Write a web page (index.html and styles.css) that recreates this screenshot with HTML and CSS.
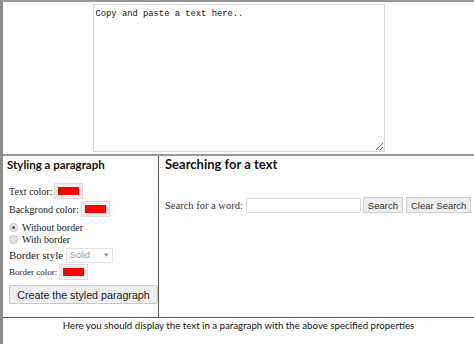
FILE: index.html
```html
<!DOCTYPE html>
<html lang="en">
<head>
    <meta charset="UTF-8">
    <title>Text styling</title>
    <link rel="stylesheet" href="styles.css">
</head>
<body>

<div class="page">
    <!-- area de texto -->
    <div class="text-row">
        <textarea class="source">Copy and paste a text here..</textarea>
    </div>

    <div class="tools-row">
        <div class="styling">
            <h3>Styling a paragraph</h3>
            <div class="field"><label>Text color:</label> <span class="swatch"></span></div>
            <div class="field"><label>Backgrond color:</label> <span class="swatch"></span></div>
            <div class="radios">
                <label><span class="radio checked"></span> Without border</label>
                <label><span class="radio"></span> With border</label>
            </div>
            <div class="field big"><label>Border style</label> <span class="select">Solid <i>&#9660;</i></span></div>
            <div class="field small"><label>Border color:</label> <span class="swatch"></span></div>
            <button class="create">Create the styled paragraph</button>
        </div>

        <div class="searching">
            <h3>Searching for a text</h3>
            <div class="search-line">
                <label>Search for a word:</label>
                <input type="text" class="word">
                <button class="btn">Search</button>
                <button class="btn">Clear Search</button>
            </div>
        </div>
    </div>

    <div class="result">Here you should display the text in a paragraph with the above specified properties</div>
</div>

</body>
</html>
```
FILE: styles.css
```css
body {
    margin: 0;
    background-color: #fff;
    font-family: "Liberation Serif", serif;
    overflow: hidden;
}

.page {
    border-left: 3px solid #8c8c8c;
    border-top: 2px solid #999;
    height: 342px;
}

.text-row {
    height: 154px;
    padding-top: 2px;
    box-sizing: border-box;
    display: flex;
    justify-content: center;
    border-bottom: 2px solid #999;
}

.source {
    width: 292px;
    height: 148px;
    box-sizing: border-box;
    border: 1px solid #d6d6d6;
    padding: 4px 2px;
    font-family: "Liberation Mono", monospace;
    font-size: 8.8px;
    color: #111;
    resize: both;
}

.tools-row {
    display: flex;
    height: 161px;
    border-bottom: 1px solid #555;
}

h3 {
    font-family: Lato, sans-serif;
    font-weight: bold;
    margin: 0;
    color: #111;
}

.styling {
    width: 156px;
    box-sizing: border-box;
    border-right: 1px solid #555;
    padding: 2px 0 0 6px;
}

.styling h3 {
    font-size: 11.5px;
    line-height: 14px;
    margin-bottom: 10px;
    margin-left: -2px;
}

.field {
    display: flex;
    align-items: center;
    font-size: 10px;
    color: #222;
    height: 18px;
}

.field label {
    margin-right: 3px;
}

.swatch {
    display: inline-block;
    width: 21px;
    height: 8px;
    background-color: #f00;
    border: 3px solid #eee;
    outline: 1px solid #ddd;
}

.radios {
    margin-top: 3px;
    font-size: 10px;
    color: #222;
}

.radios label {
    display: flex;
    align-items: center;
    height: 12px;
}

.radio {
    width: 7px;
    height: 7px;
    border-radius: 50%;
    background-color: #e4e4e4;
    border: 1px solid #ccc;
    margin-right: 4px;
    position: relative;
}

.radio.checked::after {
    content: "";
    position: absolute;
    left: 2px;
    top: 2px;
    width: 3px;
    height: 3px;
    border-radius: 50%;
    background-color: #555;
}

.field.big {
    font-size: 11px;
    margin-top: 1px;
}

.select {
    display: inline-flex;
    justify-content: space-between;
    align-items: center;
    width: 39px;
    height: 13px;
    padding: 0 3px;
    border: 1px solid #e2e2e2;
    font-family: "Liberation Sans", sans-serif;
    font-size: 9px;
    color: #999;
}

.select i {
    font-style: normal;
    font-size: 6px;
    color: #888;
}

.field.small {
    font-size: 9px;
    height: 16px;
}

.create {
    margin-top: 5px;
    width: 149px;
    height: 19px;
    padding: 0;
    font-family: "Liberation Sans", sans-serif;
    font-size: 10.7px;
    color: #222;
    background-color: #eee;
    border: 1px solid #c9c9c9;
    border-radius: 2px;
    white-space: nowrap;
}

.searching {
    flex: 1;
    padding: 0 0 0 6px;
    overflow: hidden;
}

.searching h3 {
    font-size: 13px;
    line-height: 16px;
}

.search-line {
    display: flex;
    align-items: center;
    margin-top: 25px;
    height: 16px;
    font-size: 10.5px;
    color: #333;
    white-space: nowrap;
}

.search-line label {
    flex-shrink: 0;
}

.word {
    flex-shrink: 0;
    margin: 0 2px 0 3px;
    width: 115px;
    height: 15px;
    box-sizing: border-box;
    border: 1px solid #d8d8d8;
    padding: 0;
}

.btn {
    flex-shrink: 0;
    height: 16px;
    padding: 0 4px;
    margin-right: 3px;
    font-family: "Liberation Sans", sans-serif;
    font-size: 9.5px;
    color: #333;
    background-color: #eee;
    border: 1px solid #cfcfcf;
    white-space: nowrap;
}

.result {
    text-align: center;
    font-family: Lato, sans-serif;
    font-size: 9.7px;
    line-height: 12px;
    color: #111;
    padding-top: 1px;
}
```
